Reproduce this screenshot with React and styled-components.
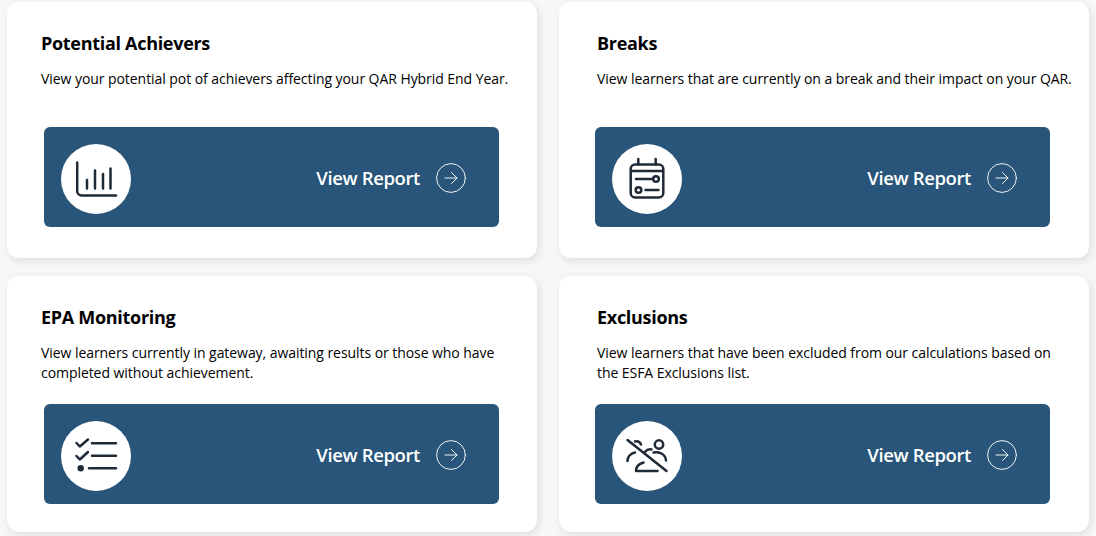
import React from "react";
import styled, { createGlobalStyle } from "styled-components";

const Global = createGlobalStyle`
  html, body { margin: 0; padding: 0; background: #f7f7f7; overflow: hidden; }
  * { box-sizing: border-box; }
  body { font-family: "Open Sans", "Noto Sans", "Liberation Sans", sans-serif; color: #000; }
`;

const Grid = styled.main`
  display: grid;
  grid-template-columns: 530px 530px;
  grid-auto-rows: 256px;
  column-gap: 22px;
  row-gap: 18px;
  padding: 2px 0 0 7px;
  width: 1096px;
  height: 536px;
`;

const Card = styled.section`
  background: #fff;
  border-radius: 12px;
  box-shadow: 2px 3px 8px rgba(0, 0, 0, 0.1);
  padding: 29px 0 0 ${(p) => p.$textInset}px;
`;

const Title = styled.h2`
  margin: 0;
  font-size: 18px;
  font-weight: 700;
  line-height: 24px;
  letter-spacing: -0.3px;
`;

const Description = styled.p`
  margin: 14px 0 0;
  font-size: 14px;
  font-weight: 400;
  line-height: 20px;
  letter-spacing: -0.06px;
  white-space: nowrap;
`;

const Banner = styled.a`
  display: flex;
  align-items: center;
  justify-content: space-between;
  width: 455px;
  height: 100px;
  margin-top: ${(p) => p.$gap}px;
  margin-left: ${(p) => p.$shift}px;
  padding: 0 33px 0 17px;
  background: #285579;
  border-radius: 6px;
  color: #fff;
`;

const IconDisc = styled.span`
  display: block;
  width: 70px;
  height: 70px;
  margin-top: 4px;
  border-radius: 50%;
  background: #fff;
  svg { display: block; }
`;

const Action = styled.span`
  display: flex;
  align-items: center;
  gap: 16px;
  margin-top: 2px;
  svg { display: block; }
`;

const ActionLabel = styled.span`
  margin-bottom: 2px;
  font-size: 18.5px;
  font-weight: 600;
  letter-spacing: -0.38px;
`;

const stroke = {
  fill: "none",
  stroke: "#1f2a37",
  strokeWidth: 2.5,
  strokeLinecap: "round",
  strokeLinejoin: "round",
};

const Glyph = ({ children }) => (
  <svg width="70" height="70" viewBox="0 0 70 70" {...stroke}>
    {children}
  </svg>
);

const ChartIcon = () => (
  <Glyph>
    <path d="M16.200 18.500V47a4.500 4.500 0 0 0 4.500 4.500H55" />
    <path d="M26 36v8.500M34 26.500v18M42 30v14.500M49.500 24.500v20" />
  </Glyph>
);

const CalendarIcon = () => (
  <Glyph>
    <rect x="18.700" y="20.500" width="32.600" height="33" rx="4.500" />
    <path d="M26.300 15v5.500M43.700 15v5.500M19 27h32" />
    <path d="M24 35h15.500M33.500 46h13" />
    <circle cx="44" cy="35" r="2.800" />
    <circle cx="26.500" cy="46" r="2.800" />
  </Glyph>
);

const ChecklistIcon = () => (
  <Glyph>
    <path d="M15.500 22l3.300 3.500 8.200-7M15.500 35l3.300 3.500 8.200-7.500" />
    <path d="M31 22.300h24M31 34.700h24M28 47.300h27" />
    <circle cx="19.700" cy="47.300" r="2" fill="#1f2a37" />
  </Glyph>
);

const ExcludedIcon = () => (
  <Glyph>
    <path d="M15.500 19l39 31" />
    <circle cx="47" cy="23.500" r="4.200" />
    <path d="M41.500 31.500c5-1 12 1 12.500 8" />
    <path d="M33 31c2-2.500 4.500-3 6.500-2.500" />
    <path d="M23 20.500c2.500-.5 5 .5 6 3" />
    <path d="M15.500 40c0-4 3-7.500 7.500-8.500" />
    <path d="M24 50c0-4 2.500-7 7.500-8.500M24 50h21.500" />
  </Glyph>
);

const ArrowCircle = () => (
  <svg width="30" height="30" viewBox="0 0 30 30" fill="none" stroke="#fff" strokeOpacity="0.92" strokeWidth="1" strokeLinecap="round" strokeLinejoin="round">
    <circle cx="15" cy="15" r="14.400" />
    <path d="M9 15h12M15.500 9.500L21 15l-5.500 5.500" />
  </svg>
);

const cards = [
  { title: "Potential Achievers", lines: ["View your potential pot of achievers affecting your QAR Hybrid End Year."], Icon: ChartIcon, textInset: 34, shift: 3, gap: 38 },
  { title: "Breaks", lines: ["View learners that are currently on a break and their impact on your QAR."], Icon: CalendarIcon, textInset: 38, shift: -2, gap: 38 },
  { title: "EPA Monitoring", lines: ["View learners currently in gateway, awaiting results or those who have", "completed without achievement."], Icon: ChecklistIcon, textInset: 34, shift: 3, gap: 21 },
  { title: "Exclusions", lines: ["View learners that have been excluded from our calculations based on", "the ESFA Exclusions list."], Icon: ExcludedIcon, textInset: 38, shift: -2, gap: 21 },
];

export default function App() {
  return (
    <>
      <Global />
      <Grid>
        {cards.map(({ title, lines, Icon, textInset, shift, gap }) => (
          <Card key={title} $textInset={textInset}>
            <Title>{title}</Title>
            <Description>
              {lines.map((l, i) => (
                <React.Fragment key={l}>
                  {i > 0 && <br />}
                  {l}
                </React.Fragment>
              ))}
            </Description>
            <Banner $gap={gap} $shift={shift}>
              <IconDisc><Icon /></IconDisc>
              <Action>
                <ActionLabel>View Report</ActionLabel>
                <ArrowCircle />
              </Action>
            </Banner>
          </Card>
        ))}
      </Grid>
    </>
  );
}
